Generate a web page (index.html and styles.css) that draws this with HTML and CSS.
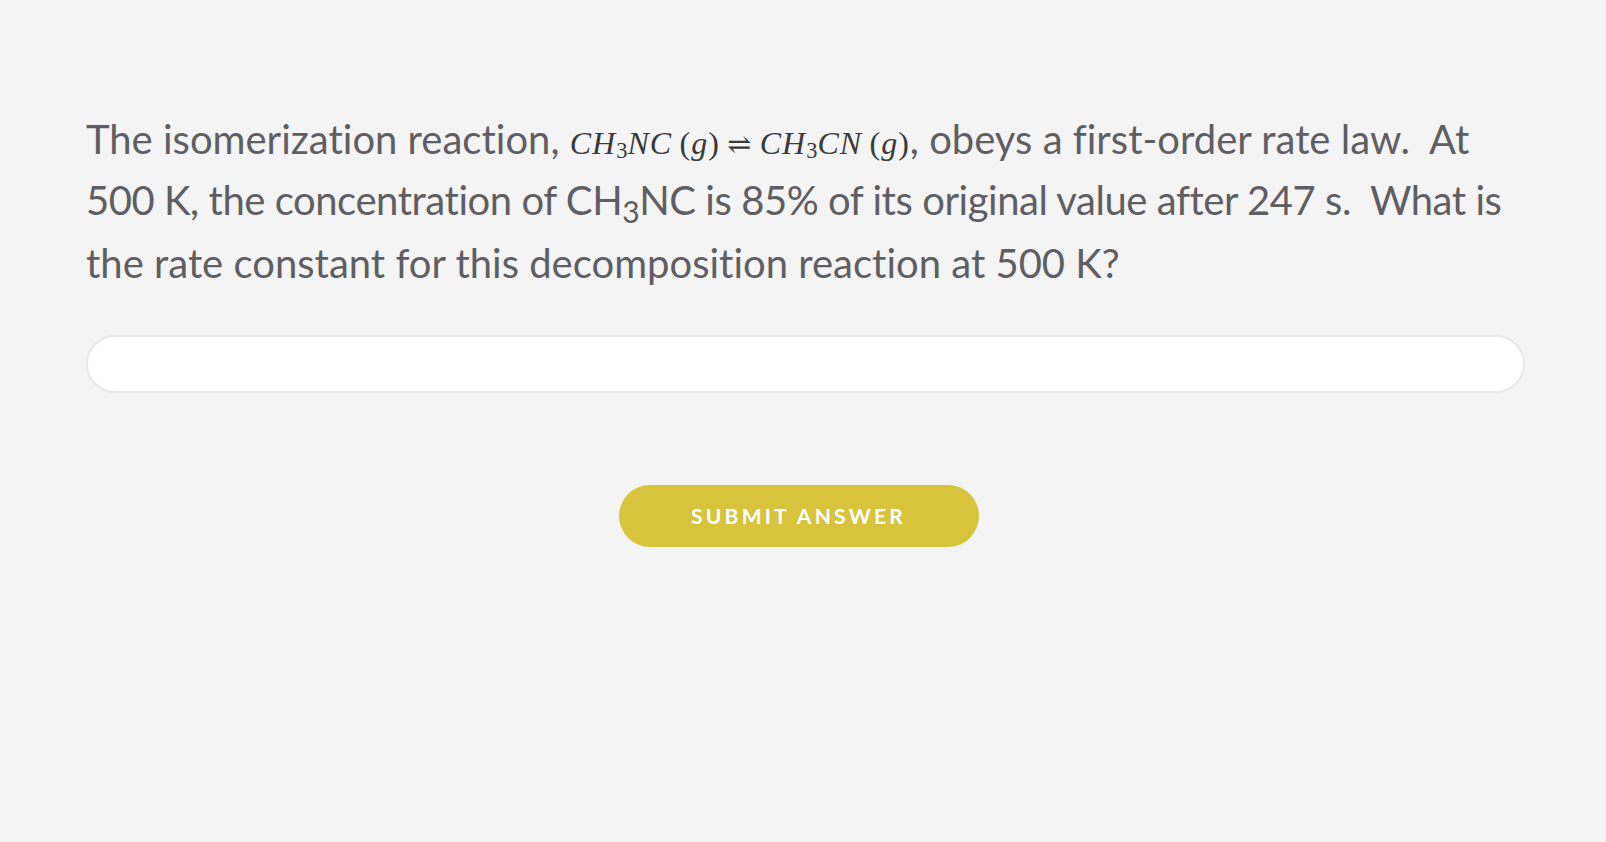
FILE: index.html
```html
<!DOCTYPE html>
<html lang="en">
<head>
<meta charset="utf-8">
<title>Question</title>
<link rel="stylesheet" href="styles.css">
</head>
<body>
<main class="page">
  <p class="question">The isomerization reaction, <span class="math"><i>CH</i><sub>3</sub><i>NC</i>&#8201;(<i>g</i>)&#8201;<span class="arrow">&#8652;</span>&#8201;<i>CH</i><sub>3</sub><i>CN</i>&#8201;(<i>g</i>)</span>, obeys a first-order rate law.&nbsp; At<br><span class="tight">500&nbsp;K, the concentration of CH<sub class="sub">3</sub>NC is 85% of its original value after 247 s.&nbsp; What&nbsp;is</span><br>the rate constant for this decomposition reaction at 500 K?</p>
  <input class="answer" type="text" aria-label="Answer">
  <div class="actions">
    <button class="submit" type="button">SUBMIT ANSWER</button>
  </div>
</main>
</body>
</html>
```
FILE: styles.css
```css
html, body {
  margin: 0;
  padding: 0;
  background: #f4f4f4;
}
.page {
  padding: 109px 81px 0 86px;
  display: flex;
  flex-direction: column;
}
.question {
  margin: 0 -40px 0 0;
  font-family: Lato, "Noto Sans", sans-serif;
  font-size: 40px;
  line-height: 61px;
  color: #5f5e63;
  font-variant-ligatures: none;
  font-feature-settings: "liga" 0;
  white-space: nowrap;
}
.question .tight {
  letter-spacing: -0.45px;
}
.question .sub {
  font-size: 0.75em;
  line-height: 44px;
  vertical-align: -0.25em;
}
.math {
  font-family: "Liberation Serif", "DejaVu Serif", serif;
  font-size: 32px;
  line-height: 1;
  letter-spacing: 1px;
  color: #3a3a3a;
}
.math sub {
  font-size: 0.7em;
  line-height: 0;
  vertical-align: -0.2em;
  letter-spacing: 0;
}
.math .arrow {
  font-size: 0.9em;
}
.answer {
  margin-top: 41px;
  height: 58px;
  box-sizing: border-box;
  border: 2px solid #e8e8e8;
  border-radius: 29px;
  background: #fff;
  outline: none;
  padding: 0 28px;
  font-family: Lato, sans-serif;
  font-size: 24px;
}
.actions {
  display: flex;
  justify-content: center;
  margin-top: 92px;
  padding-right: 14px;
}
.submit {
  width: 360px;
  height: 62px;
  border: none;
  border-radius: 31px;
  background: #d8c33d;
  color: #fff;
  font-family: Lato, sans-serif;
  font-size: 21px;
  font-weight: 700;
  letter-spacing: 3.2px;
  cursor: pointer;
}
```
